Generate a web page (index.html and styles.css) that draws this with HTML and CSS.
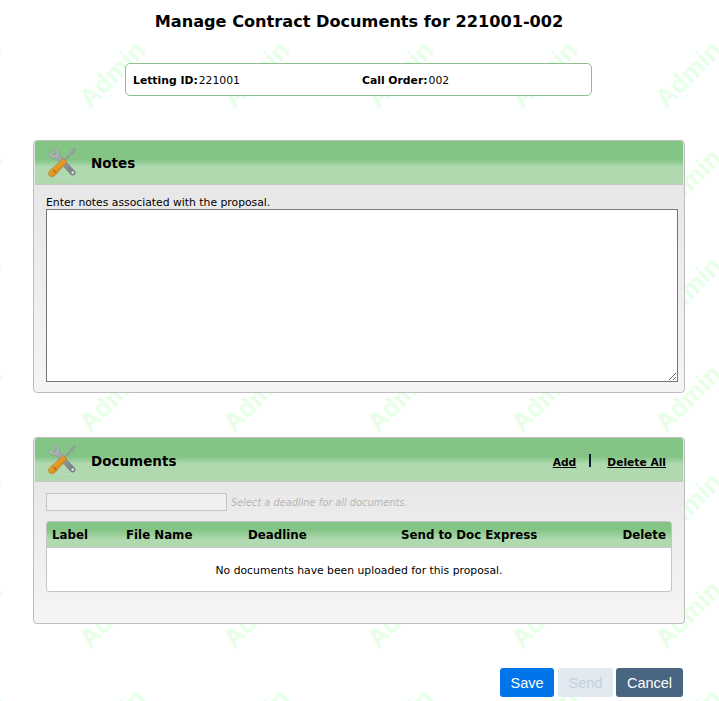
FILE: index.html
```html
<!DOCTYPE html>
<html lang="en">
<head>
<meta charset="utf-8">
<title>Manage Contract Documents</title>
<link rel="stylesheet" href="styles.css">
</head>
<body>
<div class="watermarks" aria-hidden="true">
  <span>Admin</span><span>Admin</span><span>Admin</span><span>Admin</span><span>Admin</span><span>Admin</span>
  <span>Admin</span><span>Admin</span><span>Admin</span><span>Admin</span><span>Admin</span><span>Admin</span>
  <span>Admin</span><span>Admin</span><span>Admin</span><span>Admin</span><span>Admin</span><span>Admin</span>
  <span>Admin</span><span>Admin</span><span>Admin</span><span>Admin</span><span>Admin</span><span>Admin</span>
  <span>Admin</span><span>Admin</span><span>Admin</span><span>Admin</span><span>Admin</span><span>Admin</span>
  <span>Admin</span><span>Admin</span><span>Admin</span><span>Admin</span><span>Admin</span><span>Admin</span>
  <span>Admin</span><span>Admin</span><span>Admin</span><span>Admin</span><span>Admin</span><span>Admin</span>
</div>
<svg class="defs" width="0" height="0" aria-hidden="true">
  <defs>
    <linearGradient id="handle" x1="0" y1="0" x2="1" y2="1">
      <stop offset="0" stop-color="#f6b73c"/><stop offset="1" stop-color="#c87a10"/>
    </linearGradient>
    <linearGradient id="steel" x1="0" y1="0" x2="1" y2="1">
      <stop offset="0" stop-color="#c4c8cc"/><stop offset="1" stop-color="#6d7378"/>
    </linearGradient>
    <symbol id="tools" viewBox="0 0 30 30">
      <path d="M2.2 3.6 6 7l2.700-.7.7-2.700L5.900.6c2.500-.9 5.300.1 6.200 2.500.5 1.200.4 2.400 0 3.400l15.400 16.300c1 1.100 1 2.700 0 3.700-1 1-2.700 1-3.700-.1L8.300 10c-1.100.3-2.300.3-3.400-.2C2.500 8.800 1.400 6 2.200 3.600Z" fill="url(#steel)" stroke="#74797e" stroke-width=".4"/>
      <circle cx="25.700" cy="24.600" r="1.300" fill="#e9ecee"/>
      <path d="M27.700.4 29 1.700l-3 4.200-1.500.4-7.500 8-1.400-1.400 7.800-7.700.3-1.500Z" fill="#9aa0a5" stroke="#74797e" stroke-width=".3"/>
      <path d="M16.500 10.500 20 14 8 27.500c-1.500 1.500-4 1.800-5.500.5-1.500-1.500-1.200-4 .3-5.500Z" fill="url(#handle)" stroke="#a8660c" stroke-width=".4"/>
      <path d="M6 21.500 9.500 25" stroke="#8a5208" stroke-width="1"/>
      <path d="M7 29h19" stroke="#c9d6c9" stroke-width=".8"/>
    </symbol>
  </defs>
</svg>
<main class="page">
  <h1 class="title">Manage Contract Documents for 221001-002</h1>
  <div class="summary">
    <div class="summary-item"><b>Letting ID:</b><span>221001</span></div>
    <div class="summary-item"><b>Call Order:</b><span>002</span></div>
  </div>

  <section class="panel panel-notes">
    <header class="panel-head">
      <svg class="panel-icon" width="30" height="30"><use href="#tools"/></svg>
      <h2>Notes</h2>
    </header>
    <div class="panel-body notes-body">
      <label class="notes-label" for="notes">Enter notes associated with the proposal.</label>
      <textarea id="notes" class="notes-input"></textarea>
    </div>
  </section>

  <section class="panel panel-docs">
    <header class="panel-head">
      <svg class="panel-icon" width="30" height="30"><use href="#tools"/></svg>
      <h2>Documents</h2>
      <nav class="panel-links">
        <a href="#">Add</a><span class="sep"></span><a href="#">Delete All</a>
      </nav>
    </header>
    <div class="panel-body docs-body">
      <div class="deadline-row">
        <input class="deadline-input" type="text" disabled>
        <span class="deadline-hint">Select a deadline for all documents.</span>
      </div>
      <div class="doc-table">
        <div class="doc-head">
          <span class="col-label">Label</span>
          <span class="col-file">File Name</span>
          <span class="col-deadline">Deadline</span>
          <span class="col-send">Send to Doc Express</span>
          <span class="col-delete">Delete</span>
        </div>
        <div class="doc-empty">No documents have been uploaded for this proposal.</div>
      </div>
    </div>
  </section>

  <div class="actions">
    <button class="btn btn-save" type="button">Save</button>
    <button class="btn btn-send" type="button" disabled>Send</button>
    <button class="btn btn-cancel" type="button">Cancel</button>
  </div>
</main>
</body>
</html>
```
FILE: styles.css
```css
html, body {
  margin: 0;
  padding: 0;
  height: 701px;
  overflow: hidden;
  background: #fff;
  color: #000;
  font-family: "DejaVu Sans", Verdana, sans-serif;
  font-size: 10.800px;
}
.defs { position: absolute; }

.watermarks {
  position: absolute;
  left: 0;
  top: 0;
  width: 719px;
  height: 701px;
  overflow: hidden;
  display: grid;
  grid-template-columns: repeat(6, 144px);
  grid-auto-rows: 108px;
  padding-top: 20px;
  box-sizing: border-box;
  z-index: 0;
}
.watermarks span {
  display: flex;
  align-items: center;
  justify-content: center;
  position: relative;
  left: -104px;
  font-family: "Liberation Sans", Arial, sans-serif;
  font-size: 26px;
  font-weight: bold;
  color: #e6ffe6;
  transform: rotate(-45deg);
  white-space: nowrap;
}

.page {
  position: relative;
  z-index: 1;
  display: flex;
  flex-direction: column;
  height: 701px;
  padding: 0 34px 0 33px;
  box-sizing: border-box;
}
.title {
  margin: 12px 0 0;
  height: 20px;
  line-height: 20px;
  font-size: 16.150px;
  font-weight: bold;
  text-align: center;
}
.summary {
  display: flex;
  box-sizing: border-box;
  width: 467px;
  height: 33px;
  margin: 31px 0 0 92px;
  padding: 2px 7px 0;
  align-items: center;
  background: #fff;
  border: 1px solid #8dbf8f;
  border-radius: 5px;
}
.summary-item {
  display: flex;
  width: 229.500px;
  gap: 1px;
  line-height: 14px;
}
.summary-item:first-child { width: 229px; flex: none; }
.summary-item b { font-weight: bold; }

.panel {
  box-sizing: border-box;
  width: 652px;
  border: 1px solid #bdbdbd;
  border-radius: 4px;
  background: linear-gradient(#e4e4e4, #f5f5f5);
}
.panel-notes { margin-top: 44px; height: 253px; }
.panel-docs { margin-top: 44px; height: 187px; }
.panel-head {
  display: flex;
  align-items: center;
  box-sizing: border-box;
  height: 44px;
  margin: 0 1px;
  padding: 0 17px 0 12px;
  border-bottom: 1px solid #c8c8c8;
  border-radius: 3px 3px 0 0;
  background: linear-gradient(#84c586 0, #84c586 44%, #b0d9b0 60%, #b0d9b0 100%);
}
.panel-icon { flex: none; }
.panel-head h2 {
  margin: 0 0 0 14px;
  font-size: 13.500px;
  font-weight: bold;
  line-height: 18px;
}
.panel-docs h2 { padding-top: 2px; }
.panel-links {
  display: flex;
  align-items: center;
  margin-left: auto;
  padding-top: 5px;
  font-size: 10.700px;
  font-weight: bold;
}
.panel-links a { color: #000; text-decoration: underline; }
.sep {
  display: block;
  width: 2px;
  height: 13px;
  margin: -3px 16px 0 13px;
  background: #0f1a2b;
}
.notes-body { padding: 11px 6px 0 12px; }
.notes-label {
  display: block;
  height: 13px;
  line-height: 14px;
}
.notes-input {
  display: block;
  box-sizing: border-box;
  width: 632px;
  height: 173px;
  margin: 0;
  padding: 2px;
  background: #fff;
  border: 1px solid #767676;
  border-radius: 0;
}
.docs-body { padding: 11px 12px 0; }
.deadline-row {
  display: flex;
  align-items: center;
  gap: 4px;
  height: 18px;
}
.deadline-input {
  box-sizing: border-box;
  width: 181px;
  height: 18px;
  margin: 0;
  padding: 0;
  background: #f0f0f0;
  border: 1px solid #c4c4c4;
}
.deadline-hint {
  color: #b5b5b5;
  font-size: 9.800px;
  font-style: italic;
}
.doc-table {
  box-sizing: border-box;
  width: 626px;
  height: 71px;
  margin-top: 10px;
  background: #fff;
  border: 1px solid #c4c4c4;
  border-radius: 3px;
}
.doc-head {
  display: flex;
  align-items: center;
  box-sizing: border-box;
  height: 26px;
  padding: 0 5px;
  font-size: 11.800px;
  font-weight: bold;
  border-bottom: 1px solid #c8c8c8;
  border-radius: 2px 2px 0 0;
  background: linear-gradient(#84c586 0, #84c586 30%, #b0d9b0 72%, #b0d9b0 100%);
}
.col-label { width: 74px; }
.col-file { width: 122px; }
.col-deadline { width: 153px; }
.col-delete { margin-left: auto; }
.doc-empty {
  height: 43px;
  line-height: 45px;
  text-align: center;
}
.actions {
  display: flex;
  justify-content: flex-end;
  gap: 3px;
  margin-top: 44px;
  padding-right: 2px;
}
.btn {
  height: 29px;
  padding: 0;
  border: 0;
  border-radius: 3px;
  color: #fff;
  font-family: "Liberation Sans", Arial, sans-serif;
  font-size: 14.500px;
}
.btn-save { width: 54px; margin-right: 1px; background: #0074e8; }
.btn-send { width: 55px; background: #e1e9f1; color: #c3d0dc; }
.btn-cancel { width: 67px; background: #486581; }
```
